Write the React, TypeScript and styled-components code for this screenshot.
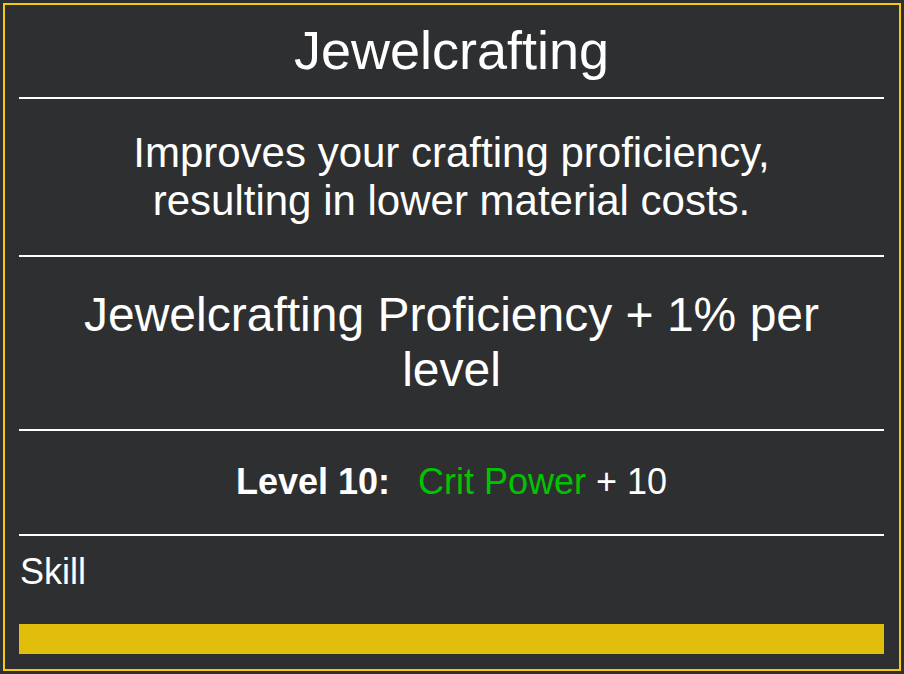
import styled, { createGlobalStyle } from "styled-components";

const GlobalStyle = createGlobalStyle`
  html, body {
    margin: 0;
    padding: 0;
    background-color: #2e2f31;
  }

  body {
    font-family: "Liberation Sans", Arial, sans-serif;
    color: #ffffff;
  }
`;

const Card = styled.div`
  box-sizing: border-box;
  height: calc(100vh - 6px);
  margin: 3px;
  border: 2px solid #f3c914;
  background-color: #2e2f31;
  padding: 14px 15px 15px 14px;
  display: flex;
  flex-direction: column;
`;

const Title = styled.div`
  font-size: 54px;
  text-align: center;
  padding-bottom: 16px;
`;

const Divider = styled.div`
  height: 2px;
  background-color: #ffffff;
`;

const Section = styled.div<{ size: number; bottom: number }>`
  font-size: ${p => p.size}px;
  text-align: center;
  padding: 30px 24px ${p => p.bottom}px;
`;

const StatLine = styled.div`
  display: flex;
  justify-content: center;
  align-items: baseline;
  font-size: 36px;
  padding: 30px 0 31px;
`;

const StatLabel = styled.span`
  font-weight: bold;
  margin-right: 28px;
`;

const StatName = styled.span`
  color: #00c400;
`;

const SkillLabel = styled.div`
  font-size: 36px;
  padding-top: 15px;
  padding-left: 1px;
`;

const ProgressBar = styled.div`
  margin-top: auto;
  height: 30px;
  background-color: #e2be0c;
`;

export default () => {
  return (
    <>
      <GlobalStyle />
      <Card>
        <Title>Jewelcrafting</Title>
        <Divider />
        <Section size={42} bottom={30}>
          Improves your crafting proficiency,
          <br />
          resulting in lower material costs.
        </Section>
        <Divider />
        <Section size={48} bottom={32}>
          Jewelcrafting Proficiency + 1% per level
        </Section>
        <Divider />
        <StatLine>
          <StatLabel>Level 10:</StatLabel>
          <StatName>Crit Power</StatName>
          &nbsp;+ 10
        </StatLine>
        <Divider />
        <SkillLabel>Skill</SkillLabel>
        <ProgressBar />
      </Card>
    </>
  );
};
